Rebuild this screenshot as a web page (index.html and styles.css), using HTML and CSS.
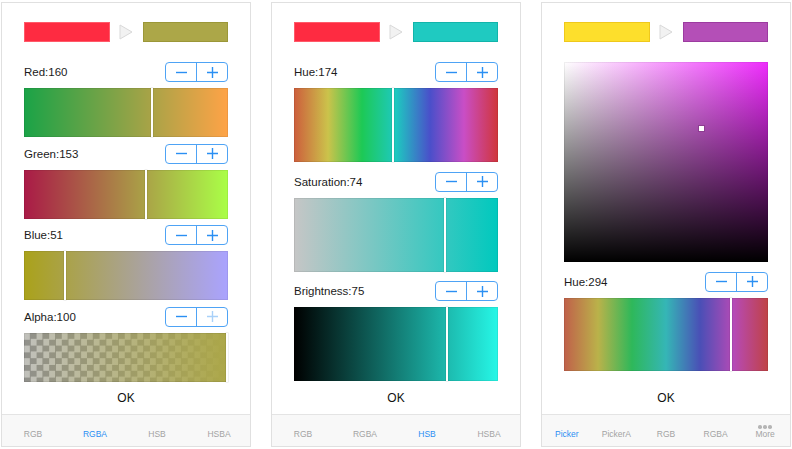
FILE: index.html
```html
<!DOCTYPE html>
<html>
<head>
<meta charset="utf-8">
<link rel="stylesheet" href="styles.css">
</head>
<body>
<div class="screen">

  <section class="panel">
    <div class="body">
      <div class="swatches">
        <div class="swatch sw-red"></div>
        <svg class="tri" width="14" height="16" viewBox="0 0 14 16"><polygon points="1,1 13,8 1,15" fill="#f2f2f2" stroke="#d9d9d9" stroke-width="1"/></svg>
        <div class="swatch sw-olive"></div>
      </div>
      <div class="group first">
        <div class="head"><span class="label">Red:160</span>
          <div class="stepper"><span class="btn"><svg width="11" height="11" viewBox="0 0 11 11"><path d="M0 5.5h11" stroke="currentColor" stroke-width="1.4"/></svg></span><span class="btn"><svg width="11" height="11" viewBox="0 0 11 11"><path d="M0 5.5h11M5.5 0v11" stroke="currentColor" stroke-width="1.4"/></svg></span></div>
        </div>
        <div class="slider g-red"><span class="thumb" style="left:62.7%"></span></div>
      </div>
      <div class="group">
        <div class="head"><span class="label">Green:153</span>
          <div class="stepper"><span class="btn"><svg width="11" height="11" viewBox="0 0 11 11"><path d="M0 5.5h11" stroke="currentColor" stroke-width="1.4"/></svg></span><span class="btn"><svg width="11" height="11" viewBox="0 0 11 11"><path d="M0 5.5h11M5.5 0v11" stroke="currentColor" stroke-width="1.4"/></svg></span></div>
        </div>
        <div class="slider g-green"><span class="thumb" style="left:60%"></span></div>
      </div>
      <div class="group">
        <div class="head"><span class="label">Blue:51</span>
          <div class="stepper"><span class="btn"><svg width="11" height="11" viewBox="0 0 11 11"><path d="M0 5.5h11" stroke="currentColor" stroke-width="1.4"/></svg></span><span class="btn"><svg width="11" height="11" viewBox="0 0 11 11"><path d="M0 5.5h11M5.5 0v11" stroke="currentColor" stroke-width="1.4"/></svg></span></div>
        </div>
        <div class="slider g-blue"><span class="thumb" style="left:20%"></span></div>
      </div>
      <div class="group">
        <div class="head"><span class="label">Alpha:100</span>
          <div class="stepper"><span class="btn"><svg width="11" height="11" viewBox="0 0 11 11"><path d="M0 5.5h11" stroke="currentColor" stroke-width="1.4"/></svg></span><span class="btn off"><svg width="11" height="11" viewBox="0 0 11 11"><path d="M0 5.5h11M5.5 0v11" stroke="currentColor" stroke-width="1.4"/></svg></span></div>
        </div>
        <div class="slider g-alpha"><span class="thumb end" style="left:100%"></span></div>
      </div>
      <div class="ok">OK</div>
    </div>
    <nav class="tabs">
      <span class="tab">RGB</span>
      <span class="tab active">RGBA</span>
      <span class="tab">HSB</span>
      <span class="tab">HSBA</span>
    </nav>
  </section>

  <section class="panel hsb">
    <div class="body">
      <div class="swatches">
        <div class="swatch sw-red"></div>
        <svg class="tri" width="14" height="16" viewBox="0 0 14 16"><polygon points="1,1 13,8 1,15" fill="#f2f2f2" stroke="#d9d9d9" stroke-width="1"/></svg>
        <div class="swatch sw-teal"></div>
      </div>
      <div class="group first">
        <div class="head"><span class="label">Hue:174</span>
          <div class="stepper"><span class="btn"><svg width="11" height="11" viewBox="0 0 11 11"><path d="M0 5.5h11" stroke="currentColor" stroke-width="1.4"/></svg></span><span class="btn"><svg width="11" height="11" viewBox="0 0 11 11"><path d="M0 5.5h11M5.5 0v11" stroke="currentColor" stroke-width="1.4"/></svg></span></div>
        </div>
        <div class="slider tall g-hue"><span class="thumb" style="left:48.6%"></span></div>
      </div>
      <div class="group">
        <div class="head"><span class="label">Saturation:74</span>
          <div class="stepper"><span class="btn"><svg width="11" height="11" viewBox="0 0 11 11"><path d="M0 5.5h11" stroke="currentColor" stroke-width="1.4"/></svg></span><span class="btn"><svg width="11" height="11" viewBox="0 0 11 11"><path d="M0 5.5h11M5.5 0v11" stroke="currentColor" stroke-width="1.4"/></svg></span></div>
        </div>
        <div class="slider tall g-sat"><span class="thumb" style="left:74%"></span></div>
      </div>
      <div class="group">
        <div class="head"><span class="label">Brightness:75</span>
          <div class="stepper"><span class="btn"><svg width="11" height="11" viewBox="0 0 11 11"><path d="M0 5.5h11" stroke="currentColor" stroke-width="1.4"/></svg></span><span class="btn"><svg width="11" height="11" viewBox="0 0 11 11"><path d="M0 5.5h11M5.5 0v11" stroke="currentColor" stroke-width="1.4"/></svg></span></div>
        </div>
        <div class="slider tall g-bri"><span class="thumb" style="left:75%"></span></div>
      </div>
      <div class="ok">OK</div>
    </div>
    <nav class="tabs">
      <span class="tab">RGB</span>
      <span class="tab">RGBA</span>
      <span class="tab active">HSB</span>
      <span class="tab">HSBA</span>
    </nav>
  </section>

  <section class="panel picker">
    <div class="body">
      <div class="swatches">
        <div class="swatch sw-yellow"></div>
        <svg class="tri" width="14" height="16" viewBox="0 0 14 16"><polygon points="1,1 13,8 1,15" fill="#f2f2f2" stroke="#d9d9d9" stroke-width="1"/></svg>
        <div class="swatch sw-purple"></div>
      </div>
      <div class="square"><span class="dot" style="left:67.6%;top:33%"></span></div>
      <div class="group">
        <div class="head"><span class="label">Hue:294</span>
          <div class="stepper"><span class="btn"><svg width="11" height="11" viewBox="0 0 11 11"><path d="M0 5.5h11" stroke="currentColor" stroke-width="1.4"/></svg></span><span class="btn"><svg width="11" height="11" viewBox="0 0 11 11"><path d="M0 5.5h11M5.5 0v11" stroke="currentColor" stroke-width="1.4"/></svg></span></div>
        </div>
        <div class="slider tall g-hue2"><span class="thumb" style="left:81.7%"></span></div>
      </div>
      <div class="ok">OK</div>
    </div>
    <nav class="tabs">
      <span class="tab active">Picker</span>
      <span class="tab">PickerA</span>
      <span class="tab">RGB</span>
      <span class="tab">RGBA</span>
      <span class="tab"><span class="dots"><i></i><i></i><i></i></span>More</span>
    </nav>
  </section>

</div>
</body>
</html>
```

FILE: styles.css
```css
html, body {
  margin: 0;
  padding: 0;
  background: #ffffff;
}

body {
  font-family: "Liberation Sans", Arial, sans-serif;
  color: #1b1b1b;
}

.screen {
  display: flex;
  gap: 20px;
  padding: 2px 0 0 1px;
}

.panel {
  width: 250px;
  height: 445px;
  box-sizing: border-box;
  border: 1px solid #e0e0e0;
  display: flex;
  flex-direction: column;
  background: #fff;
}

.body {
  flex: 1;
  display: flex;
  flex-direction: column;
  padding: 19px 22px 0;
  min-height: 0;
}

.swatches {
  display: flex;
  justify-content: space-between;
  align-items: center;
  height: 20px;
  flex: none;
}

.swatch {
  width: 85.5px;
  height: 20px;
  box-sizing: border-box;
  border: 1px solid transparent;
}

.sw-red { background: #fe2b41; border-color: #ff5a69; }
.sw-olive { background: #aca748; border-color: #9b9738; }
.sw-teal { background: #1fcac1; border-color: #12b4aa; }
.sw-yellow { background: #fddf2c; border-color: #efc81c; }
.sw-purple { background: #b44fb7; border-color: #9c3ba0; }

.tri {
  display: block;
  flex: none;
}

.group {
  flex: none;
  margin-top: 6.5px;
}

.group.first {
  margin-top: 20px;
}

.hsb .group {
  margin-top: 9.5px;
}

.hsb .group.first {
  margin-top: 20px;
}

.picker .group {
  margin-top: 9.5px;
}

.head {
  display: flex;
  justify-content: space-between;
  align-items: center;
  height: 20px;
}

.label {
  font-size: 11.5px;
  line-height: 14px;
  color: #1b1b1b;
}

.stepper {
  width: 63px;
  height: 20px;
  box-sizing: border-box;
  border: 1px solid #4ea3f5;
  border-radius: 4px;
  display: flex;
}

.btn {
  flex: 1;
  display: flex;
  align-items: center;
  justify-content: center;
  color: #2a8ff3;
}

.btn svg {
  display: block;
}

.btn + .btn {
  border-left: 1px solid #4ea3f5;
}

.btn.off {
  color: #a9d1f9;
}

.slider {
  position: relative;
  margin-top: 6px;
  height: 49px;
  box-shadow: inset 0 0 0 1px rgba(0, 0, 0, 0.07);
}

.slider.tall {
  height: 74px;
}

.picker .slider.tall {
  height: 73.5px;
}

.thumb {
  position: absolute;
  top: 0;
  bottom: 0;
  width: 2px;
  margin-left: -1px;
  background: #ffffff;
  box-shadow: 0 0 0 0.5px rgba(0, 0, 0, 0.12);
}

.thumb.end {
  margin-left: -2px;
}

.g-red { background: linear-gradient(to right, #1aa347, #ffa347); }
.g-green { background: linear-gradient(to right, #aa1a47, #aaff47); }
.g-blue { background: linear-gradient(to right, #aaa21a, #aaa3ff); }

.g-alpha {
  background:
    linear-gradient(to right, rgba(172, 167, 72, 0.05), rgba(172, 167, 72, 1)),
    conic-gradient(#8f8f8f 25%, #c2c2c2 0 50%, #8f8f8f 0 75%, #c2c2c2 0) 0 0 / 12.6px 12.6px;
}

.g-hue {
  background: linear-gradient(to right,
    #cd5e3c 0%, #cbc34b 16.7%, #1dc955 33.3%, #1ec9c0 50%,
    #4a4fca 66.7%, #c94ec6 83.3%, #d0353a 100%);
}

.g-sat { background: linear-gradient(to right, #c6c6c6, #00c9be); }
.g-bri { background: linear-gradient(to right, #000000, #26f7e7); }

.g-hue2 {
  background: linear-gradient(to right,
    #c0604a 0%, #bab24a 16.7%, #2eb85a 33.3%, #35b6b6 50%,
    #4a4fb6 66.7%, #b64ab6 83.3%, #c04245 100%);
}

.square {
  position: relative;
  flex: none;
  margin-top: 20px;
  height: 200px;
  background:
    linear-gradient(to top, #000000, rgba(0, 0, 0, 0)),
    linear-gradient(to right, #ffffff, #ee2cfc);
  box-shadow: inset 0 0 0 1px rgba(0, 0, 0, 0.06);
}

.dot {
  position: absolute;
  width: 7px;
  height: 7px;
  margin: -3.5px 0 0 -3.5px;
  box-sizing: border-box;
  background: #ffffff;
  border: 1px solid #8d3e90;
}

.ok {
  margin-top: auto;
  height: 33px;
  flex: none;
  display: flex;
  align-items: center;
  justify-content: center;
  font-size: 12px;
  color: #111;
}

.tabs {
  height: 32px;
  flex: none;
  box-sizing: border-box;
  border-top: 1px solid #e4e4e4;
  background: #f8f8f8;
  display: flex;
}

.tab {
  flex: 1;
  display: flex;
  flex-direction: column;
  align-items: center;
  justify-content: flex-end;
  padding-bottom: 7px;
  font-size: 8.5px;
  line-height: 10px;
  color: #a3a3a3;
}

.tab.active {
  color: #2a8ff3;
}

.dots {
  display: flex;
  gap: 1.5px;
  margin-bottom: 0.5px;
}

.dots i {
  display: block;
  width: 3.5px;
  height: 3.5px;
  border-radius: 50%;
  background: #b5b5b5;
}
```
